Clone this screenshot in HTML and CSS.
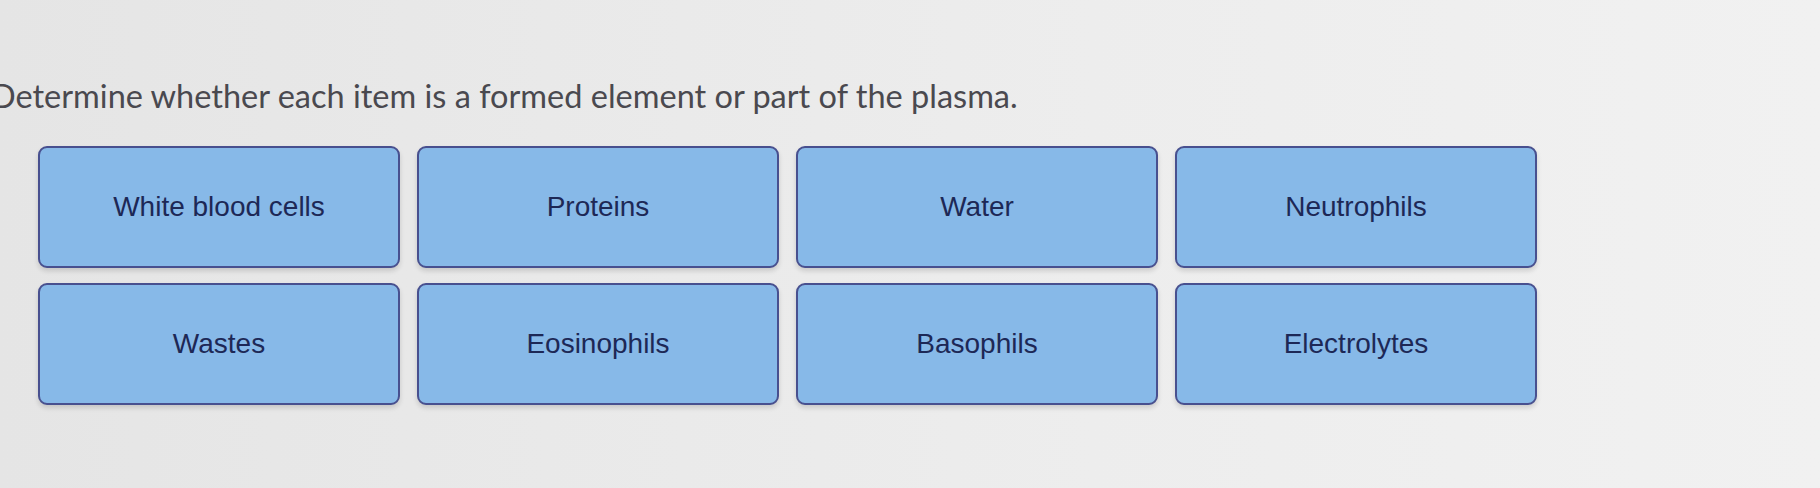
FILE: index.html
```html
<!DOCTYPE html>
<html lang="en">
<head>
    <meta charset="UTF-8">
    <meta name="viewport" content="width=device-width, initial-scale=1.0">
    <title>Formed elements or plasma</title>
    <link rel="stylesheet" href="styles.css">
</head>
<body>
    <div class="question">
        <p class="prompt">Determine whether each item is a formed element or part of the plasma.</p>

        <div class="choices">
            <div class="choice">White blood cells</div>
            <div class="choice">Proteins</div>
            <div class="choice">Water</div>
            <div class="choice">Neutrophils</div>
            <div class="choice">Wastes</div>
            <div class="choice">Eosinophils</div>
            <div class="choice">Basophils</div>
            <div class="choice">Electrolytes</div>
        </div>
    </div>
</body>
</html>
```

FILE: styles.css
```css
body {
    margin: 0;
    height: 488px;
    overflow: hidden;
    background: linear-gradient(to right, #e5e5e5, #ededed 60%, #f1f1f1);
    font-family: 'Liberation Sans', Arial, sans-serif;
}
.question {
    padding-top: 76px;
}
.prompt {
    margin: 0 0 0 -9px;
    font-family: Lato, 'Open Sans', sans-serif;
    font-size: 32.5px;
    line-height: 40px;
    color: #4a494f;
}
.choices {
    display: grid;
    grid-template-columns: repeat(4, 362px);
    grid-auto-rows: 122px;
    column-gap: 17px;
    row-gap: 15px;
    margin: 30px 0 0 38px;
}
.choice {
    display: flex;
    align-items: center;
    justify-content: center;
    background-color: #87b9e8;
    border: 2px solid #48508f;
    border-radius: 9px;
    box-shadow: 0 3px 5px rgba(0, 0, 0, 0.14);
    font-size: 28px;
    color: #1d2856;
}
```
